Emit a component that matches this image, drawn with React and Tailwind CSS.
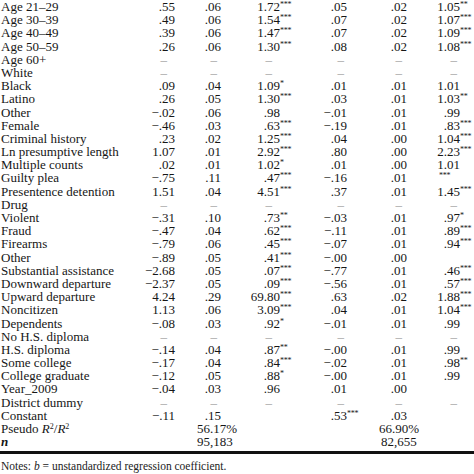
import React from 'react'

// label, model 1 [b, se, exp, stars], model 2 [b, se, exp, stars]
const D = '–'
const rows = [
  ['Age 21–29', '.55', '.06', '1.72', '***', '.05', '.02', '1.05', '**'],
  ['Age 30–39', '.49', '.06', '1.54', '***', '.07', '.02', '1.07', '***'],
  ['Age 40–49', '.39', '.06', '1.47', '***', '.07', '.02', '1.09', '***'],
  ['Age 50–59', '.26', '.06', '1.30', '***', '.08', '.02', '1.08', '***'],
  ['Age 60+', D, D, D, '', D, D, D, ''],
  ['White', D, D, D, '', D, D, D, ''],
  ['Black', '.09', '.04', '1.09', '*', '.01', '.01', '1.01', ''],
  ['Latino', '.26', '.05', '1.30', '***', '.03', '.01', '1.03', '**'],
  ['Other', '−.02', '.06', '.98', '', '−.01', '.01', '.99', ''],
  ['Female', '−.46', '.03', '.63', '***', '−.19', '.01', '.83', '***'],
  ['Criminal history', '.23', '.02', '1.25', '***', '.04', '.00', '1.04', '***'],
  ['Ln presumptive length', '1.07', '.01', '2.92', '***', '.80', '.00', '2.23', '***'],
  ['Multiple counts', '.02', '.01', '1.02', '*', '.01', '.00', '1.01', ''],
  ['Guilty plea', '−.75', '.11', '.47', '***', '−.16', '.01', '', '***'],
  ['Presentence detention', '1.51', '.04', '4.51', '***', '.37', '.01', '1.45', '***'],
  ['Drug', D, D, D, '', D, D, D, ''],
  ['Violent', '−.31', '.10', '.73', '**', '−.03', '.01', '.97', '*'],
  ['Fraud', '−.47', '.04', '.62', '***', '−.11', '.01', '.89', '***'],
  ['Firearms', '−.79', '.06', '.45', '***', '−.07', '.01', '.94', '***'],
  ['Other', '−.89', '.05', '.41', '***', '−.00', '.00', '', ''],
  ['Substantial assistance', '−2.68', '.05', '.07', '***', '−.77', '.01', '.46', '***'],
  ['Downward departure', '−2.37', '.05', '.09', '***', '−.56', '.01', '.57', '***'],
  ['Upward departure', '4.24', '.29', '69.80', '***', '.63', '.02', '1.88', '***'],
  ['Noncitizen', '1.13', '.06', '3.09', '***', '.04', '.01', '1.04', '***'],
  ['Dependents', '−.08', '.03', '.92', '*', '−.01', '.01', '.99', ''],
  ['No H.S. diploma', D, D, D, '', D, D, D, ''],
  ['H.S. diploma', '−.14', '.04', '.87', '**', '−.00', '.01', '.99', ''],
  ['Some college', '−.17', '.04', '.84', '***', '−.02', '.01', '.98', '**'],
  ['College graduate', '−.12', '.05', '.88', '*', '−.00', '.01', '.99', ''],
  ['Year_2009', '−.04', '.03', '.96', '', '.01', '.00', '', ''],
  ['District dummy', D, D, D, '', D, D, D, ''],
]

const dashPad = ['pr-[8px]', 'pr-[4px]', 'pr-[8px]', 'pr-[3px]', 'pr-[5px]', 'pr-[3px]']
const grid = 'grid grid-cols-[135px_40px_46px_59px_67px_60px_53px] h-[13.2px] leading-[13.2px] whitespace-nowrap'

// superscript stars that hang past the right edge of the number
const Stars = ({ s }) =>
  s ? (
    <span className="inline-block w-0 align-top overflow-visible">
      <span className="block text-[8px] leading-[8px] tracking-[-0.3px] mt-[1px]">{s}</span>
    </span>
  ) : null

const Cell = ({ v, s, i }) => {
  if (v === D) {
    return <div className={`text-right text-[#9a9a9a] ${dashPad[i]}`}>–</div>
  }
  if (!v && s) {
    return (
      <div className="text-right pr-[21px]">
        <Stars s={s} />
      </div>
    )
  }
  return (
    <div className="text-right">
      {v}
      <Stars s={s} />
    </div>
  )
}

export default function App() {
  return (
    <div
      className="w-[474px] h-[474px] overflow-hidden bg-white text-[#161616] text-[13px]"
      style={{ fontFamily: '"Liberation Serif", "Times New Roman", serif' }}
    >
      <div>
        {rows.map((r, idx) => (
          <div key={idx} className={grid}>
            <div className="pl-[1px]">{r[0]}</div>
            <Cell v={r[1]} i={0} />
            <Cell v={r[2]} i={1} />
            <Cell v={r[3]} s={r[4]} i={2} />
            <Cell v={r[5]} i={3} />
            <Cell v={r[6]} i={4} />
            <Cell v={r[7]} s={r[8]} i={5} />
          </div>
        ))}
        <div className={grid}>
          <div className="pl-[1px]">Constant</div>
          <Cell v="−.11" i={0} />
          <Cell v=".15" i={1} />
          <div />
          <Cell v=".53" s="***" i={3} />
          <Cell v=".03" i={4} />
          <div />
        </div>
        <div className={grid}>
          <div className="pl-[1px]">
            Pseudo <i>R</i>
            <sup className="text-[8px]">2</sup>/<i>R</i>
            <sup className="text-[8px]">2</sup>
          </div>
          <div className="col-span-3 pl-[62px]">56.17%</div>
          <div className="col-span-3 pl-[99px]">66.90%</div>
        </div>
        <div className={grid}>
          <div className="pl-[1px] italic font-bold">n</div>
          <div className="col-span-3 pl-[62px]">95,183</div>
          <div className="col-span-3 pl-[101px]">82,655</div>
        </div>
      </div>
      <div className="mt-[3px] h-[3px] bg-[#111]" />
      <div className="mt-[5px] pl-[1px] text-[11.5px] leading-[14px] text-[#222]">
        Notes: <i>b</i> = unstandardized regression coefficient.
      </div>
    </div>
  )
}
